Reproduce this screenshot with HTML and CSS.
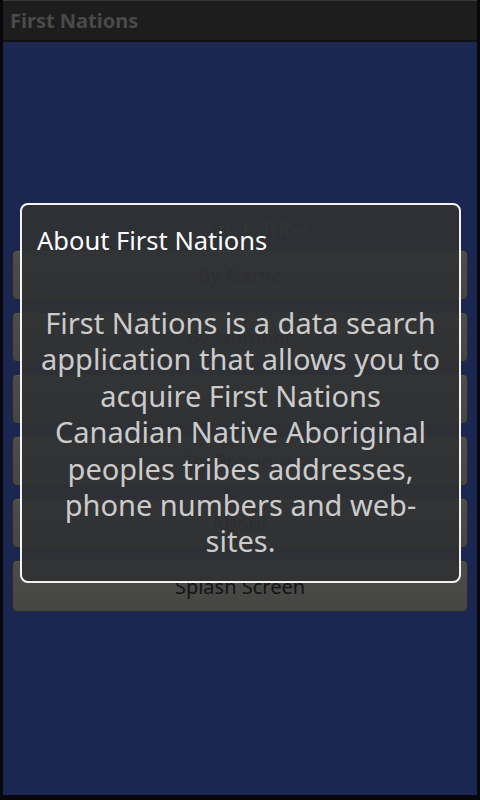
FILE: index.html
```html
<!DOCTYPE html>
<html lang="en">
<head>
<meta charset="utf-8">
<title>First Nations</title>
<link rel="stylesheet" href="styles.css">
</head>
<body>
<div class="screen">
  <header class="titlebar">First Nations</header>
  <main class="content">
    <div class="section-label">Search Tribe</div>
    <div class="buttons">
      <button class="btn">By Name</button>
      <button class="btn">By Number</button>
      <button class="btn">By City</button>
      <button class="btn">By Province</button>
      <button class="btn">About</button>
      <button class="btn">Splash Screen</button>
    </div>
  </main>

  <div class="dialog" role="dialog">
    <h1 class="dialog-title">About First Nations</h1>
    <p class="dialog-message">First Nations is a data search<br>application that allows you to<br>acquire First Nations<br>Canadian Native Aboriginal<br>peoples tribes addresses,<br>phone numbers and web-<br>sites.</p>
  </div>
</div>
</body>
</html>
```

FILE: styles.css
```css
* {
  box-sizing: border-box;
}

html, body {
  margin: 0;
  padding: 0;
  background: #000;
}

body {
  font-family: "Noto Sans", "Open Sans", sans-serif;
}

.screen {
  position: relative;
  width: 480px;
  height: 800px;
  display: flex;
  flex-direction: column;
  padding: 0 3px 5px 3px;
  background: #07080d;
  overflow: hidden;
}

/* dimmed window title bar */
.titlebar {
  height: 42px;
  flex: none;
  background: #1d1d1d;
  border-top: 1px solid #3a3a3a;
  border-bottom: 2px solid #111;
  color: #4a4a4a;
  font-weight: 700;
  font-size: 20px;
  line-height: 39px;
  padding-left: 7px;
}

.content {
  flex: 1;
  background: #1b2651;
  padding: 176px 9px 0 9px;
  display: flex;
  flex-direction: column;
}

.section-label {
  height: 32px;
  text-align: center;
  color: #5a5a5a;
  font-size: 20px;
  line-height: 24px;
  padding-left: 20px;
}

.buttons {
  display: flex;
  flex-direction: column;
  gap: 12px;
}

.btn {
  height: 50px;
  border: 1px solid #2a2a2c;
  border-radius: 5px;
  background: linear-gradient(#4d4d4b, #454543);
  box-shadow: inset 0 1px 0 #5a5a58;
  color: #141414;
  font-family: inherit;
  font-size: 20px;
  padding: 0;
}

.btn:last-child {
  height: 52px;
}

/* about dialog floating over the dimmed screen */
.dialog {
  position: absolute;
  left: 20px;
  top: 203px;
  width: 441px;
  height: 380px;
  border: 2px solid #f2f2f2;
  border-radius: 8px;
  background: rgba(48, 49, 51, 0.92);
  display: flex;
  flex-direction: column;
}

.dialog-title {
  margin: 0;
  padding: 18px 0 0 15px;
  height: 100px;
  color: #fff;
  font-weight: 400;
  font-size: 25.5px;
  line-height: 34px;
}

.dialog-message {
  margin: 0;
  text-align: center;
  color: #cbcbcb;
  font-size: 29px;
  line-height: 36.4px;
}
```
